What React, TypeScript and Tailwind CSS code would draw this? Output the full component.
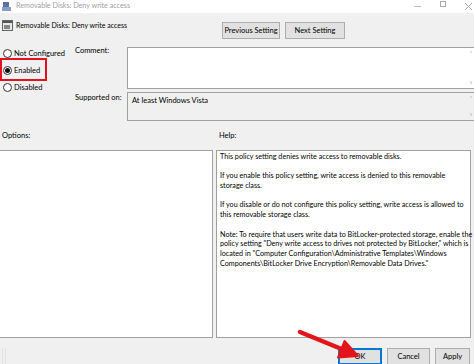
import React from 'react'

const font = { fontFamily: 'Lato, "Noto Sans", sans-serif' }

const helpParas = [
	['This policy setting denies write access to removable disks.'],
	['If you enable this policy setting, write access is denied to this removable', 'storage class.'],
	['If you disable or do not configure this policy setting, write access is allowed to', 'this removable storage class.'],
	[
		'Note: To require that users write data to BitLocker-protected storage, enable the',
		'policy setting "Deny write access to drives not protected by BitLocker," which is',
		'located in "Computer Configuration\\Administrative Templates\\Windows',
		'Components\\BitLocker Drive Encryption\\Removable Data Drives."',
	],
]

const Radio: React.FC<{ label: string; checked?: boolean }> = ({ label, checked }) => (
	<div className="flex h-[17px] items-center">
		<div className="ml-[3px] flex h-[9px] w-[9px] items-center justify-center rounded-full border border-[#333] bg-white">
			{checked && <div className="h-[5px] w-[5px] rounded-full bg-[#111]"></div>}
		</div>
		<span className="ml-[2px] text-[7.5px] text-black">{label}</span>
	</div>
)

const MiniScroll: React.FC = () => (
	<div className="flex w-[6px] flex-col items-center justify-between py-[3px] text-[5px] leading-none text-[#b0b0b0]">
		<span>^</span>
		<span>v</span>
	</div>
)

const Btn: React.FC<{ label: string; w: string; focus?: boolean }> = ({ label, w, focus }) => (
	<div
		className={`flex h-[17px] items-center justify-center whitespace-nowrap bg-[#e1e1e1] text-[7.5px] text-black ${w} ${
			focus ? 'border-2 border-[#0078d7]' : 'border border-[#adadad]'
		}`}
	>
		{label}
	</div>
)

export default function App() {
	return (
		<div className="relative h-[364px] w-[474px] overflow-hidden bg-[#f0f0f0]" style={font}>
			{/* title bar */}
			<div className="flex h-[13px] items-center bg-white">
				<svg width="9" height="10" viewBox="0 0 9 10" className="ml-[2px]">
					<rect x="1" y="0" width="6" height="6" fill="#5b6fa8" />
					<rect x="0" y="5" width="9" height="4" fill="#8a9bc8" />
				</svg>
				<span className="ml-[5px] text-[7.2px] text-[#a0a0a0]">Removable Disks: Deny write access</span>
				<div className="ml-auto flex items-center gap-[19px] pr-[2px]">
					<div className="h-px w-[7px] bg-[#bbb]"></div>
					<div className="mb-[5px] h-[6px] w-[6px] border border-[#aaa]"></div>
					<svg width="7" height="7" viewBox="0 0 7 7">
						<path d="M0 0 L7 7 M7 0 L0 7" stroke="#aaa" strokeWidth="1" />
					</svg>
				</div>
			</div>

			{/* header row */}
			<div className="flex h-[31px]">
				<div className="flex w-[222px] items-start">
					<svg width="11" height="11" viewBox="0 0 11 11" className="ml-[2px] mt-[7px]">
						<rect x="0.5" y="0.5" width="10" height="10" fill="#e8e8e8" stroke="#666" />
						<rect x="1" y="1" width="9" height="2" fill="#555" />
						<rect x="2" y="5" width="6" height="4" fill="#7d8a7d" />
					</svg>
					<span className="ml-[3px] mt-[7px] text-[7px] leading-[11px] text-black">
						Removable Disks: Deny write access
					</span>
				</div>
				<div className="mt-[9px] flex gap-[5px]">
					<Btn label="Previous Setting" w="w-[58px]" />
					<Btn label="Next Setting" w="w-[60px]" />
				</div>
			</div>

			{/* upper area */}
			<div className="flex h-[77px]">
				<div className="w-[75px] pt-[1px]">
					<Radio label="Not Configured" />
					<Radio label="Enabled" checked />
					<Radio label="Disabled" />
				</div>
				<div className="relative w-[52px] text-[7.5px] text-black">
					<div className="absolute top-[1px] leading-[11px]">Comment:</div>
					<div className="absolute top-[48px] leading-[11px]">Supported on:</div>
				</div>
				<div className="flex-1">
					<div className="mt-[3px] flex h-[42px] border-y border-l border-[#a0a0a0] bg-white">
						<div className="flex-1"></div>
						<MiniScroll />
					</div>
					<div className="mt-[3px] flex h-[29px] border-y border-l border-[#a0a0a0] bg-[#f0f0f0]">
						<div className="flex-1 pl-[4px] pt-[3px] text-[7.5px] leading-[10px] text-black">At least Windows Vista</div>
						<MiniScroll />
					</div>
				</div>
			</div>

			{/* labels */}
			<div className="flex h-[29px] items-center text-[7.5px] text-black">
				<span className="ml-[2px] w-[217px]">Options:</span>
				<span>Help:</span>
			</div>

			{/* panels */}
			<div className="flex h-[188px] gap-[3px]">
				<div className="w-[213px] border-y border-r border-[#a0a0a0] bg-white"></div>
				<div className="w-[255px] border border-[#a0a0a0] bg-white pl-[3px] pt-[1px] text-[7.2px] leading-[9.7px] text-black">
					{helpParas.map((p, i) => (
						<div key={i} className="mb-[9.7px] whitespace-nowrap">
							{p.map((l, j) => (
								<div key={j}>{l}</div>
							))}
						</div>
					))}
				</div>
			</div>

			{/* bottom buttons */}
			<div className="flex h-[26px] pt-[10px]">
				<div className="ml-[2px] h-full w-[4px] border-x border-[#e2e2e2]"></div>
				<div className="ml-auto flex gap-[5px] pr-[4px]">
					<Btn label="OK" w="w-[44px]" focus />
					<Btn label="Cancel" w="w-[43px]" />
					<Btn label="Apply" w="w-[35px]" />
				</div>
			</div>

			{/* annotations */}
			<div className="absolute left-0 top-[58px] h-[23px] w-[47px] border-2 border-[#e3101e]"></div>
			<svg className="pointer-events-none absolute left-0 top-0" width="474" height="364" viewBox="0 0 474 364">
				<line x1="300" y1="332" x2="344" y2="350" stroke="#e3151a" strokeWidth="4.5" strokeLinecap="round" />
				<polygon points="358,356 338,357.5 344.5,341" fill="#e3151a" stroke="#e3151a" strokeWidth="2" strokeLinejoin="round" />
			</svg>
		</div>
	)
}
